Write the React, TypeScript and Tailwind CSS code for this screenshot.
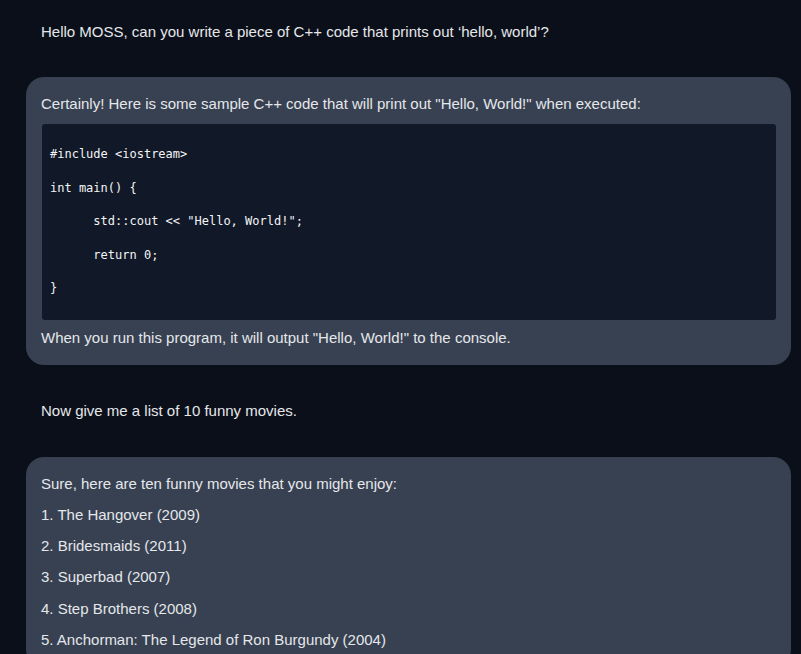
const code = `#include <iostream>

int main() {

      std::cout << "Hello, World!";

      return 0;

}`;

const movies = [
  '1. The Hangover (2009)',
  '2. Bridesmaids (2011)',
  '3. Superbad (2007)',
  '4. Step Brothers (2008)',
  '5. Anchorman: The Legend of Ron Burgundy (2004)',
];

function UserMessage({ text }: { text: string }) {
  return (
    <div className="px-[15px] py-4 leading-[22px]">
      <p>{text}</p>
    </div>
  );
}

function BotMessage({ children }: { children: React.ReactNode }) {
  return (
    <div className="rounded-[18px] bg-[#374151] px-[15px] py-4 leading-[22px]">
      {children}
    </div>
  );
}

export default function App() {
  return (
    <div
      className="h-[654px] overflow-hidden bg-[#0b0f19] text-[15px] text-[#e5e7eb] pl-[26px] pr-[10px] pt-[5px] flex flex-col gap-[18px]"
      style={{ fontFamily: '"Liberation Sans", Arial, sans-serif' }}
    >
      <UserMessage text="Hello MOSS, can you write a piece of C++ code that prints out ‘hello, world’?" />

      <BotMessage>
        <p>Certainly! Here is some sample C++ code that will print out "Hello, World!" when executed:</p>
        <pre
          className="mt-[9px] mb-[7px] ml-px rounded-[3px] bg-[#111827] px-2 pt-[22px] pb-[23px] text-[12px] leading-[16.75px] text-[#f3f4f6]"
          style={{ fontFamily: '"DejaVu Sans Mono", monospace' }}
        >
          {code}
        </pre>
        <p>When you run this program, it will output "Hello, World!" to the console.</p>
      </BotMessage>

      <div className="pt-px">
        <UserMessage text="Now give me a list of 10 funny movies." />
      </div>

      <div className="pt-px">
        <BotMessage>
          <div className="flex flex-col gap-[9.2px]">
            <p>Sure, here are ten funny movies that you might enjoy:</p>
            {movies.map((m) => (
              <p key={m}>{m}</p>
            ))}
          </div>
        </BotMessage>
      </div>
    </div>
  );
}
